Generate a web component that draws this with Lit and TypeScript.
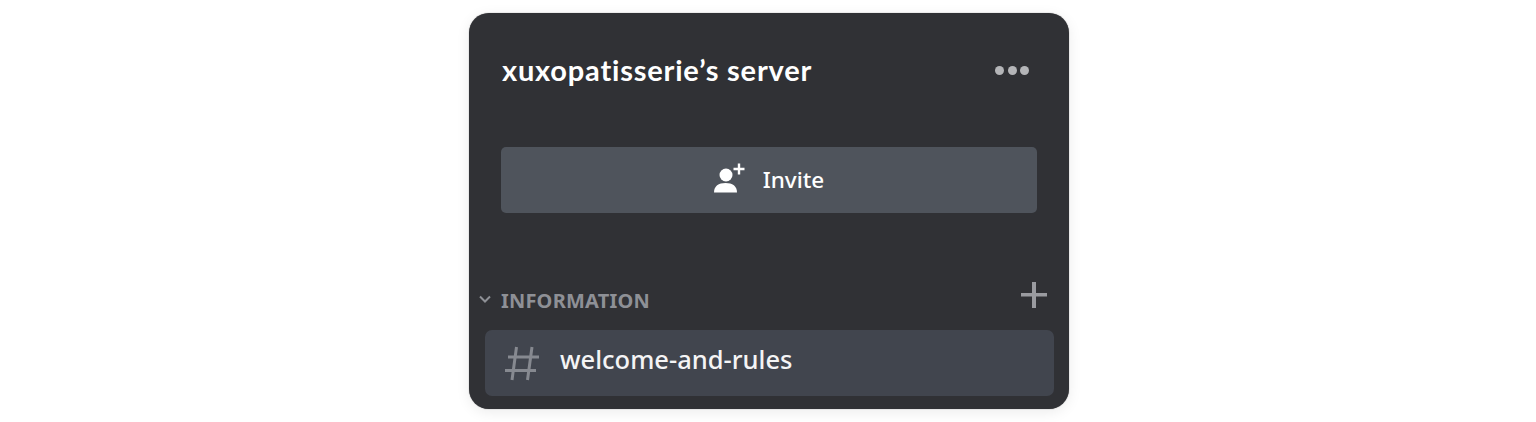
import { LitElement, html, css } from "lit";
import { customElement } from "lit/decorators.js";

@customElement("app-root")
export class AppRoot extends LitElement {
  static styles = css`
    :host { display: block; height: 422px; background: #fff; overflow: hidden; box-sizing: border-box; padding: 13px 0 0 469px; }
    .card {
      box-sizing: border-box; width: 600px; height: 396px; background: #303135; border-radius: 20px;
      box-shadow: 0 0 1px 0 rgba(0,0,0,.55), 0 3px 14px rgba(0,0,0,.08);
      display: flex; flex-direction: column; padding: 0 15px 13px 16px;
    }
    .head { display: flex; align-items: center; justify-content: space-between; height: 116px; padding: 0 25px 0 17px; box-sizing: border-box; flex: none; }
    .title { font: 700 29px/34px "Lato", sans-serif; color: #fff; letter-spacing: .8px; margin-top: -2px; }
    .dots { display: flex; gap: 3.5px; margin-top: -2px; }
    .dots i { width: 9px; height: 9px; border-radius: 50%; background: #b4b5b8; display: block; }
    .btn {
      margin: 18px 17px 0 16px; height: 66px; flex: none; background: #4f545c; border-radius: 5px;
      display: flex; align-items: center; justify-content: center; gap: 15px; color: #fff;
      font: 500 22.5px/30px "Noto Sans", sans-serif;
    }
    .btn svg { width: 34px; height: 34px; flex: none; margin-top: -4px; }
    .section { display: flex; align-items: center; margin-top: 68px; height: 40px; flex: none; }
    .chev { width: 16px; height: 16px; flex: none; margin-left: -8px; margin-top: -4px; }
    .section span { font: 700 20px/24px "Noto Sans", sans-serif; color: #8e9096; margin-left: 8px; flex: 1; letter-spacing: .2px; }
    .plus { width: 26px; height: 26px; flex: none; margin-right: 7px; margin-top: -12px; }
    .row {
      margin-top: 9px; height: 66px; flex: none; background: #41454e; border-radius: 7px;
      display: flex; align-items: center; padding-left: 20px; gap: 21px;
    }
    .row svg { width: 34px; height: 35px; flex: none; margin-top: 1px; }
    .row span { font: 500 25.5px/32px "Noto Sans", sans-serif; color: #f4f4f5; margin-top: -8px; }
  `;

  render() {
    return html`<div class="card">
      <div class="head">
        <div class="title">xuxopatisserie’s server</div>
        <div class="dots"><i></i><i></i><i></i></div>
      </div>
      <div class="btn">
        <svg viewBox="0 0 34 34" fill="#fff">
          <circle cx="12" cy="14" r="6.500"></circle>
          <path d="M0 31.500c0-6.500 4.500-9.500 11.500-9.500S23 25 23 31.500z"></path>
          <path d="M19.500 6.800h4.300V2.500h2.400v4.300h4.300v2.400h-4.300v4.300h-2.400V9.200h-4.300z"></path>
        </svg>
        <span>Invite</span>
      </div>
      <div class="section">
        <svg class="chev" viewBox="0 0 16 16" fill="none" stroke="#8e9096" stroke-width="2"><path d="M3 5.500l5 5 5-5"></path></svg>
        <span>INFORMATION</span>
        <svg class="plus" viewBox="0 0 26 26" fill="#9a9ba0"><path d="M11 0h4v11h11v3.500H15V26h-4V14.500H0V11h11z"></path></svg>
      </div>
      <div class="row">
        <svg viewBox="0 0 34 35" fill="none" stroke="#868990" stroke-width="3"><path d="M11.500 1L7 34M27 1l-4.500 33M3 11h31M0 24.500h31"></path></svg>
        <span>welcome-and-rules</span>
      </div>
    </div>`;
  }
}
